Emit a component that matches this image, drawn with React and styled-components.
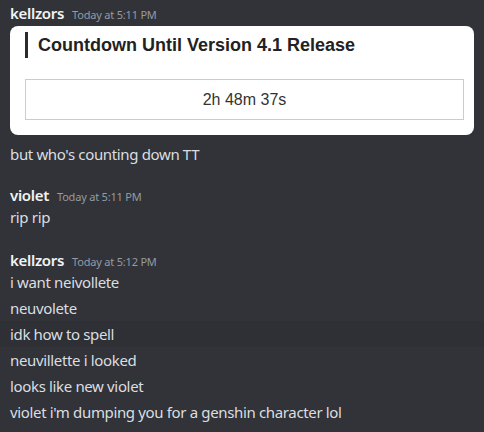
import React from 'react';
import styled, { createGlobalStyle } from 'styled-components';

const GlobalStyle = createGlobalStyle`
  html, body {
    margin: 0;
    padding: 0;
    background: #313338;
  }
  body {
    font-family: 'Noto Sans', 'Open Sans', sans-serif;
  }
`;

const Chat = styled.div`
  width: 484px;
  height: 432px;
  overflow: hidden;
  background: #313338;
  box-sizing: border-box;
`;

const Group = styled.div`
  margin-top: ${(props) => props.gap}px;
`;

const Row = styled.div`
  padding: 2px 10px;
  background: ${(props) => (props.hover ? '#2e3035' : 'transparent')};
`;

const Header = styled.div`
  display: flex;
  align-items: baseline;
  gap: 8px;
  height: 22px;
  line-height: 22px;
`;

const Name = styled.span`
  color: #f2f3f5;
  font-size: 15px;
  font-weight: 600;
  letter-spacing: -0.3px;
`;

const Stamp = styled.span`
  color: #949ba4;
  font-size: 11px;
  letter-spacing: -0.2px;
`;

const Text = styled.div`
  color: #dbdee1;
  font-size: 15px;
  line-height: 22px;
  letter-spacing: -0.35px;
`;

const Embed = styled.div`
  margin: 2px 0 4px;
  background: #ffffff;
  border-radius: 8px;
  padding: 6px 10px 15px 15px;
  font-family: 'Liberation Sans', Arial, sans-serif;
`;

const Title = styled.div`
  border-left: 3px solid #2b2b2b;
  padding-left: 10px;
  font-size: 18px;
  font-weight: 700;
  line-height: 26px;
  color: #222222;
`;

const Timer = styled.div`
  margin-top: 21px;
  height: 39px;
  border: 1px solid #cccccc;
  display: flex;
  align-items: center;
  justify-content: center;
  font-size: 16px;
  color: #333333;
`;

const groups = [
  {
    name: 'kellzors',
    time: 'Today at 5:11 PM',
    embed: true,
    gap: 0,
    lines: ["but who's counting down TT"],
  },
  { name: 'violet', time: 'Today at 5:11 PM', gap: 15, lines: ['rip rip'] },
  {
    name: 'kellzors',
    time: 'Today at 5:12 PM',
    gap: 17,
    lines: [
      'i want neivollete',
      'neuvolete',
      'idk how to spell',
      'neuvillette i looked',
      'looks like new violet',
      "violet i'm dumping you for a genshin character lol",
    ],
    hovered: 2,
  },
];

const App = () => (
  <>
    <GlobalStyle />
    <Chat>
      {groups.map((g, gi) => (
        <Group key={gi} gap={g.gap}>
          <Row>
            <Header>
              <Name>{g.name}</Name>
              <Stamp>{g.time}</Stamp>
            </Header>
            {g.embed ? (
              <Embed>
                <Title>Countdown Until Version 4.1 Release</Title>
                <Timer>2h 48m 37s</Timer>
              </Embed>
            ) : (
              <Text>{g.lines[0]}</Text>
            )}
          </Row>
          {g.lines.slice(g.embed ? 0 : 1).map((line, li) => (
            <Row key={li} hover={g.hovered === li + 1}>
              <Text>{line}</Text>
            </Row>
          ))}
        </Group>
      ))}
    </Chat>
  </>
);

export default App;
